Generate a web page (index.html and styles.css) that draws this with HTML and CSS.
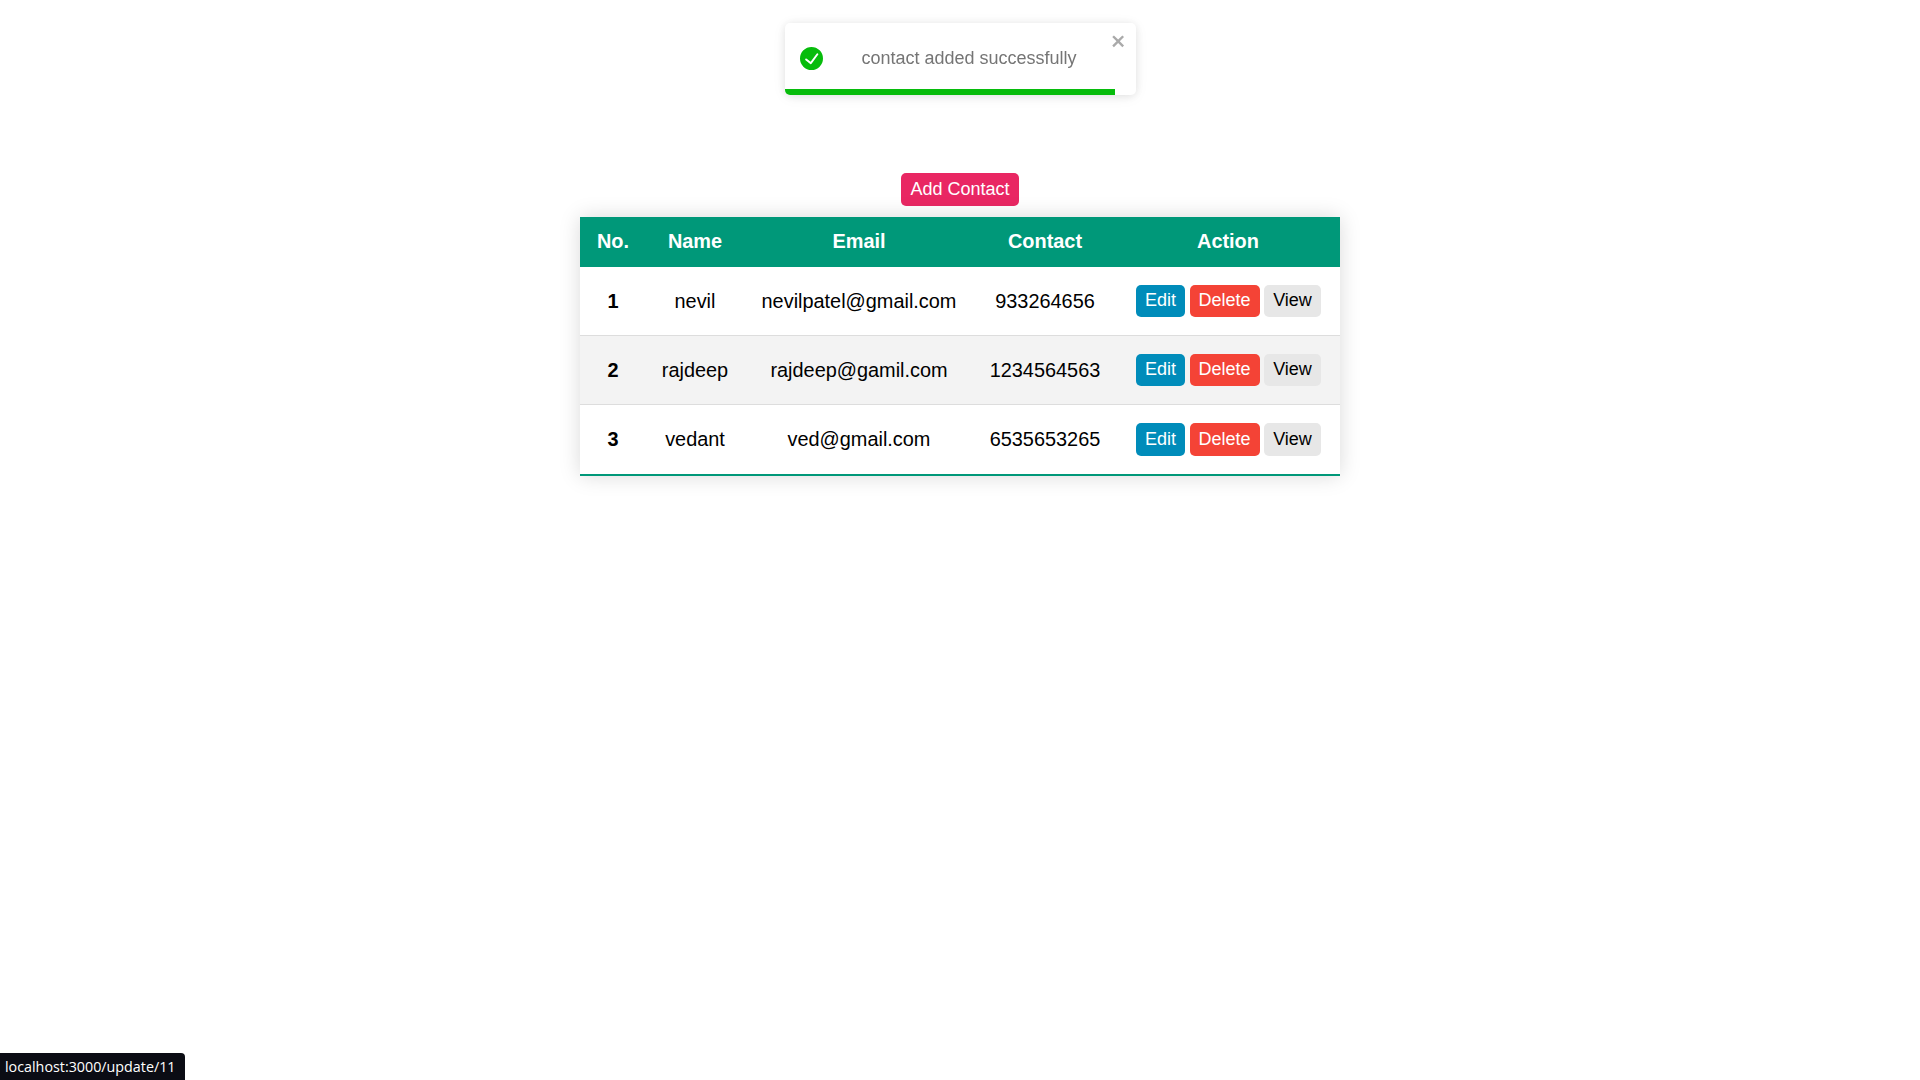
FILE: index.html
```html
<!DOCTYPE html>
<html lang="en">
<head>
    <meta charset="UTF-8">
    <meta name="viewport" content="width=device-width, initial-scale=1.0">
    <title>Contacts</title>
    <link rel="stylesheet" href="styles.css">
</head>
<body>
    <div class="toast">
        <svg class="toast-icon" viewBox="0 0 24 24"><path d="M12 0a12 12 0 1012 12A12.014 12.014 0 0012 0zm6.927 8.2l-6.845 9.289a1.011 1.011 0 01-1.43.188l-4.888-3.908a1 1 0 111.25-1.562l4.076 3.261 6.227-8.451a1 1 0 111.61 1.183z"/></svg>
        <div class="toast-text">contact added successfully</div>
        <svg class="toast-close" viewBox="0 0 14 16"><path d="M7.71 8.23l3.75 3.75-1.48 1.48-3.75-3.75-3.75 3.75L1 11.98l3.75-3.75L1 4.48 2.48 3l3.75 3.75L9.98 3l1.48 1.48-3.75 3.75z"/></svg>
        <div class="toast-progress"></div>
    </div>

    <main class="page">
        <button class="btn btn-add">Add Contact</button>
        <table class="contacts">
            <thead>
                <tr>
                    <th class="col-no">No.</th>
                    <th class="col-name">Name</th>
                    <th class="col-email">Email</th>
                    <th class="col-contact">Contact</th>
                    <th class="col-action">Action</th>
                </tr>
            </thead>
            <tbody>
                <tr>
                    <th>1</th>
                    <td>nevil</td>
                    <td>nevilpatel@gmail.com</td>
                    <td>933264656</td>
                    <td>
                        <div class="actions">
                            <button class="btn btn-edit">Edit</button>
                            <button class="btn btn-delete">Delete</button>
                            <button class="btn btn-view">View</button>
                        </div>
                    </td>
                </tr>
                <tr>
                    <th>2</th>
                    <td>rajdeep</td>
                    <td>rajdeep@gamil.com</td>
                    <td>1234564563</td>
                    <td>
                        <div class="actions">
                            <button class="btn btn-edit">Edit</button>
                            <button class="btn btn-delete">Delete</button>
                            <button class="btn btn-view">View</button>
                        </div>
                    </td>
                </tr>
                <tr>
                    <th>3</th>
                    <td>vedant</td>
                    <td>ved@gmail.com</td>
                    <td>6535653265</td>
                    <td>
                        <div class="actions">
                            <button class="btn btn-edit">Edit</button>
                            <button class="btn btn-delete">Delete</button>
                            <button class="btn btn-view">View</button>
                        </div>
                    </td>
                </tr>
            </tbody>
        </table>
    </main>

    <div class="status-bar">localhost:3000/update/11</div>
</body>
</html>
```

FILE: styles.css
```css
html, body {
    height: 100%;
}

body {
    margin: 0;
    background: #fff;
    color: #000;
    font-family: "Liberation Sans", Arial, sans-serif;
    font-size: 19.9px;
    overflow: hidden;
}

.page {
    display: flex;
    flex-direction: column;
    align-items: center;
    padding-top: 173px;
}

.btn {
    border: none;
    border-radius: 5px;
    font-family: inherit;
    font-size: 18px;
    height: 32px;
    padding: 0 0 1px;
    cursor: pointer;
}

.btn-add {
    width: 118px;
    height: 33px;
    margin-bottom: 11px;
    background: #e92763;
    color: #fff;
}

.contacts {
    width: 760px;
    table-layout: fixed;
    border-collapse: separate;
    border-spacing: 0;
    box-shadow: 0 0 20px rgba(0, 0, 0, 0.15);
}

.col-no { width: 66px; }
.col-name { width: 98px; }
.col-email { width: 230px; }
.col-contact { width: 142px; }
.col-action { width: 224px; }

.contacts th,
.contacts td {
    text-align: center;
    padding: 0;
}

.contacts thead th {
    height: 49px;
    padding-bottom: 1px;
    background: #009879;
    color: #fff;
}

.contacts tbody tr {
    height: 69px;
}

.contacts tbody th,
.contacts tbody td {
    border-bottom: 1px solid #ddd;
}

.contacts tbody tr:nth-child(even) {
    background: #f3f3f3;
}

.contacts tbody tr:last-child {
    height: 71px;
}

.contacts tbody tr:last-child th,
.contacts tbody tr:last-child td {
    border-bottom: 2px solid #009879;
}

.contacts tbody tr:last-child .btn {
    height: 33px;
}

.actions {
    display: flex;
    justify-content: center;
    gap: 4.5px;
    padding-left: 1px;
}

.btn-edit {
    width: 49px;
    background: #008cba;
    color: #fff;
}

.btn-delete {
    width: 70px;
    background: #f44336;
    color: #fff;
}

.btn-view {
    width: 57px;
    background: #e7e7e7;
    color: #000;
}

/* toast floats above the page */
.toast {
    position: fixed;
    top: 23px;
    left: 785px;
    width: 351px;
    height: 72px;
    display: flex;
    align-items: center;
    box-sizing: border-box;
    padding: 0 10px 2px 15px;
    background: #fff;
    border-radius: 5px;
    box-shadow: 0 1px 10px rgba(0, 0, 0, 0.1), 0 2px 15px rgba(0, 0, 0, 0.05);
    overflow: hidden;
}

.toast-icon {
    width: 23px;
    height: 23px;
    flex-shrink: 0;
    fill: #07bc0c;
}

.toast-text {
    flex: 1;
    text-align: center;
    color: #757575;
    font-size: 18px;
    margin-left: 4px;
    margin-right: 15px;
}

.toast-close {
    position: absolute;
    top: 9px;
    right: 9px;
    width: 16px;
    height: 18px;
    fill: #aaa;
}

.toast-progress {
    position: absolute;
    left: 0;
    bottom: 0;
    width: 330px;
    height: 6px;
    background: #07bc0c;
}

.status-bar {
    position: fixed;
    left: 0;
    bottom: 0;
    width: 185px;
    height: 27px;
    box-sizing: border-box;
    padding-left: 5px;
    line-height: 27px;
    background: #0b0c14;
    color: #fff;
    font-family: "Open Sans", "Noto Sans", sans-serif;
    font-size: 14.3px;
    border-top-right-radius: 4px;
    white-space: nowrap;
}
```
